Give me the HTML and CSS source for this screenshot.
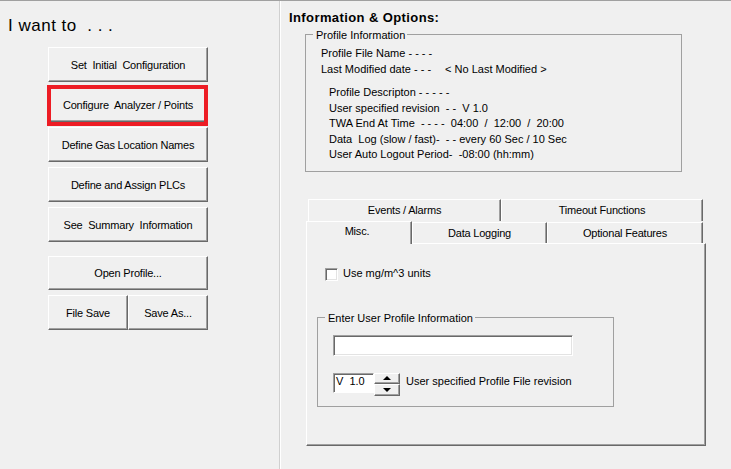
FILE: index.html
```html
<!DOCTYPE html>
<html>
<head>
<meta charset="utf-8">
<link rel="stylesheet" href="styles.css">
</head>
<body>
<div class="window">
  <div class="left">
    <h1 class="intro">I want to  . . .</h1>
    <div class="actions">
      <button class="btn">Set  Initial  Configuration</button>
      <div class="highlight"><button class="btn">Configure  Analyzer / Points</button></div>
      <button class="btn">Define Gas Location Names</button>
      <button class="btn">Define and Assign PLCs</button>
      <button class="btn">See  Summary  Information</button>
      <button class="btn btn-open">Open Profile...</button>
      <div class="btn-pair">
        <button class="btn btn-half">File Save</button>
        <button class="btn btn-half">Save As...</button>
      </div>
    </div>
  </div>
  <div class="right">
    <h2 class="title">Information &amp; Options:</h2>
    <div class="group profile">
      <div class="legend">Profile Information</div>
      <div class="rows-top">
        <div class="row">Profile File Name - - - -</div>
        <div class="row">Last Modified date - - -<span class="nolm">&lt; No Last Modified &gt;</span></div>
      </div>
      <div class="rows-detail">
        <div class="row">Profile Descripton - - - - -</div>
        <div class="row">User specified revision  - -  V 1.0</div>
        <div class="row">TWA End At Time  - - - -  04:00  /  12:00  /  20:00</div>
        <div class="row">Data  Log (slow / fast)-  - - every 60 Sec / 10 Sec</div>
        <div class="row">User Auto Logout Period-  -08:00 (hh:mm)</div>
      </div>
    </div>
    <div class="tabs">
      <div class="tabrow back">
        <div class="tab t-events">Events / Alarms</div>
        <div class="tab t-timeout">Timeout Functions</div>
      </div>
      <div class="tabrow front">
        <div class="tab active t-misc">Misc.</div>
        <div class="tab t-log">Data Logging</div>
        <div class="tab t-opt">Optional Features</div>
      </div>
      <div class="panel">
        <div class="check">
          <span class="box"></span>
          <span class="check-label">Use mg/m^3 units</span>
        </div>
        <div class="group userinfo">
          <div class="legend">Enter User Profile Information</div>
          <div class="textbox"></div>
          <div class="spinrow">
            <div class="spinvalue">V  1.0</div>
            <div class="spinbtns">
              <div class="spinbtn"><span class="arrow up"></span></div>
              <div class="spinbtn"><span class="arrow down"></span></div>
            </div>
            <div class="spinlabel">User specified Profile File revision</div>
          </div>
        </div>
      </div>
    </div>
  </div>
</div>
</body>
</html>
```
FILE: styles.css
```css
* { box-sizing: border-box; }
html, body { margin: 0; padding: 0; }
body {
  background: #f0f0f0;
  font-family: "Liberation Sans", Arial, sans-serif;
  font-size: 11px;
  color: #000;
}
.window {
  display: flex;
  width: 731px;
  height: 469px;
  border-top: 1px solid #a0a0a0;
  overflow: hidden;
}
.left {
  width: 280px;
  flex: none;
  border-right: 1px solid #d0d0d0;
}
.intro {
  margin: 15px 0 0 8px;
  font-size: 17px;
  font-weight: normal;
  letter-spacing: 0.5px;
  line-height: 20px;
  white-space: pre;
}
.actions {
  margin: 11px 0 0 48px;
  width: 160px;
  display: flex;
  flex-direction: column;
  gap: 5px;
}
.btn {
  display: block;
  height: 35px;
  width: 100%;
  padding: 0;
  margin: 0;
  background: #f0f0f0;
  border: 1px solid;
  border-color: #fff #696969 #696969 #fff;
  box-shadow: inset -1px -1px #a0a0a0;
  font-family: "Liberation Sans", Arial, sans-serif;
  font-size: 11px;
  letter-spacing: -0.2px;
  color: #000;
  white-space: pre;
  text-align: center;
}
.highlight { position: relative; }
.highlight::after {
  content: "";
  position: absolute;
  top: -2px;
  left: -1px;
  right: 0;
  bottom: -4px;
  border: 4px solid #ed1c24;
}
.btn-open { margin-top: 9px; height: 34px; }
.btn-pair { display: flex; }
.btn-half { width: 80px; }

.right {
  flex: 1;
  border-left: 1px solid #fff;
  padding-left: 8px;
}
.title {
  margin: 9px 0 0 0;
  font-size: 13px;
  font-weight: bold;
  letter-spacing: 0.4px;
  line-height: 16px;
}
.group {
  border: 1px solid #a0a0a0;
}
.legend {
  width: fit-content;
  margin: -6px 0 0 7px;
  padding: 0 2px 0 3px;
  background: #f0f0f0;
  line-height: 13px;
  white-space: pre;
}
.profile {
  margin: 8px 0 0 16px;
  width: 377px;
  padding-bottom: 8px;
}
.row { white-space: pre; }
.rows-top { margin-top: 3px; padding-left: 15px; line-height: 16px; }
.rows-detail { margin-top: 8px; padding-left: 23px; line-height: 15.5px; }
.nolm { margin-left: 14px; }

.tabs {
  margin: 27px 0 0 17px;
  width: 400px;
}
.tabrow { display: flex; }
.tab {
  background: #f0f0f0;
  border-top: 1px solid #fff;
  border-left: 1px solid #fff;
  border-right: 1px solid #696969;
  box-shadow: inset -1px 0 #a0a0a0;
  text-align: center;
  line-height: 13px;
  letter-spacing: -0.2px;
  white-space: pre;
}
.back { margin-left: 2px; }
.back .tab { height: 22px; padding-top: 4px; }
.t-events { width: 193px; }
.t-timeout { width: 202px; }
.front { height: 22px; align-items: flex-end; }
.front .tab { height: 21px; padding-top: 4px; }
.front .tab.active {
  height: 23px;
  margin-bottom: -1px;
  padding-top: 3px;
  padding-right: 4px;
  position: relative;
  z-index: 1;
}
.t-misc { width: 106px; }
.t-log { width: 135px; }
.t-opt { width: 156px; }
.panel {
  height: 203px;
  border: 1px solid;
  border-color: #fff #696969 #696969 #fff;
  box-shadow: inset -1px -1px #a0a0a0;
  padding: 24px 0 0 10px;
}
.check {
  display: flex;
  align-items: flex-start;
  margin-left: 8px;
  gap: 5px;
}
.box {
  width: 13px;
  height: 13px;
  background: #fff;
  border: 1px solid;
  border-color: #a0a0a0 #fff #fff #a0a0a0;
  box-shadow: inset 1px 1px #696969, inset -1px -1px #e3e3e3;
}
.check-label { line-height: 13px; margin-top: -1px; }
.userinfo {
  margin-top: 36px;
  width: 297px;
  padding-bottom: 10px;
}
.textbox {
  margin: 10px 0 0 15px;
  width: 240px;
  height: 21px;
  background: #fff;
  border: 1px solid;
  border-color: #a0a0a0 #fff #fff #a0a0a0;
  box-shadow: inset 1px 1px #696969, inset -1px -1px #e3e3e3;
}
.spinrow {
  display: flex;
  align-items: flex-start;
  margin: 17px 0 0 15px;
}
.spinvalue {
  width: 41px;
  height: 20px;
  background: #fff;
  border: 1px solid;
  border-color: #a0a0a0 #fff #fff #a0a0a0;
  box-shadow: inset 1px 1px #696969;
  padding: 1px 0 0 2px;
  line-height: 13px;
  white-space: pre;
}
.spinbtns {
  width: 26px;
  height: 23px;
  display: flex;
  flex-direction: column;
}
.spinbtn {
  flex: 1;
  display: flex;
  align-items: center;
  justify-content: center;
  background: #f0f0f0;
  border: 1px solid;
  border-color: #fff #696969 #696969 #fff;
  box-shadow: inset -1px -1px #a0a0a0;
}
.arrow {
  width: 0;
  height: 0;
  border-left: 4px solid transparent;
  border-right: 4px solid transparent;
}
.arrow.up { border-bottom: 4px solid #000; }
.arrow.down { border-top: 4px solid #000; }
.spinlabel {
  margin-left: 6px;
  padding-top: 2px;
  line-height: 13px;
  white-space: pre;
}
```
